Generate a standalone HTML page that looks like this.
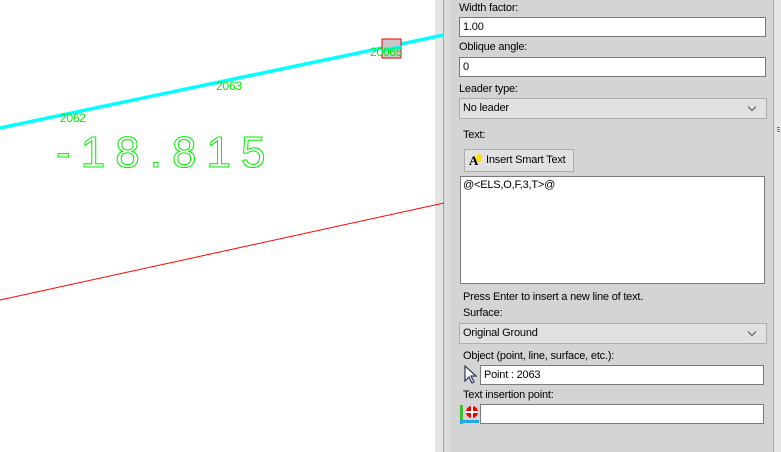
<!DOCTYPE html>
<html><head><style>
body{margin:0;width:781px;height:452px;overflow:hidden;background:#fff;font-family:"Liberation Sans",sans-serif;font-size:11px;letter-spacing:-0.2px;color:#000;position:relative}
.a{position:absolute}
.lbl{position:absolute;left:459px;font-size:11px;line-height:14px;white-space:nowrap}
.inp{position:absolute;left:459px;width:302px;height:18px;background:#fff;border:1px solid #7a7a7a;box-sizing:content-box;line-height:18px;padding-left:3px;font-size:11px;white-space:nowrap}
.sel{position:absolute;left:459px;width:303px;height:19px;background:#e1e1e1;border:1px solid #adadad;line-height:19px;padding-left:3px;font-size:11px}
.sel:after{content:"";position:absolute;right:11px;top:5px;width:5px;height:5px;border-right:1px solid #555;border-bottom:1px solid #555;transform:rotate(45deg)}
</style></head><body>
<div class="a" style="left:435px;top:0;width:346px;height:452px;background:#e6e6e6"></div>
<div class="a" style="left:443px;top:0;width:1px;height:452px;background:#a0a0a0"></div>
<div class="a" style="left:444px;top:0;width:6px;height:452px;background:#dcdcdc"></div>
<div class="a" style="left:450px;top:0;width:323px;height:452px;background:#d4d4d4"></div>
<div class="a" style="left:773px;top:0;width:1px;height:452px;background:#a8a8a8"></div>
<div class="a" style="left:777px;top:127px;width:3px;height:1px;background:#777;box-shadow:0 2px #777,0 4px #777"></div>
<svg class="a" style="left:0;top:0" width="444" height="452">
<line x1="0" y1="128" x2="444" y2="35" stroke="#00ffff" stroke-width="3.5"/>
<line x1="0" y1="300" x2="444" y2="203" stroke="#ff0000" stroke-width="1"/>
<rect x="382" y="39" width="19" height="19" fill="#c8c8c8" stroke="#e00" stroke-width="1"/>
<line x1="382" y1="51" x2="401" y2="47" stroke="#00ffff" stroke-width="3.5"/>
<g fill="#00ee00" font-family="Liberation Sans" font-size="12">
<text x="60" y="122">2062</text><text x="216" y="90">2063</text><text x="370" y="56">20065</text></g>
<text x="56" y="167" font-family="Liberation Sans" font-size="44" fill="none" stroke="#00ee00" stroke-width="1" letter-spacing="6.5" textLength="216">-18.815</text>
</svg>
<div class="lbl" style="top:1px">Width factor:</div>
<div class="inp" style="top:17px">1.00</div>
<div class="lbl" style="top:40px">Oblique angle:</div>
<div class="inp" style="top:57px">0</div>
<div class="lbl" style="top:82px">Leader type:</div>
<div class="sel" style="top:98px">No leader</div>
<div class="lbl" style="left:463px;top:128px">Text:</div>
<div class="a" style="left:464px;top:149px;width:108px;height:21px;background:#e1e1e1;border:1px solid #adadad;line-height:21px;white-space:nowrap"><span style="position:absolute;left:4px;font-family:'Liberation Serif';font-weight:bold;font-size:13px">A</span><span class="a" style="left:11px;top:4px;width:6px;height:8px;background:#ffe000;border-radius:50%"></span><span style="position:absolute;left:21px">Insert Smart Text</span></div>
<div class="a" style="left:460px;top:176px;width:301px;background:#fff;border:1px solid #7a7a7a;padding:2px 0 0 2px;box-sizing:content-box;height:104px">@&lt;ELS,O,F,3,T&gt;@</div>
<div class="lbl" style="left:463px;top:290px">Press Enter to insert a new line of text.</div>
<div class="lbl" style="left:463px;top:306px">Surface:</div>
<div class="sel" style="top:323px">Original Ground</div>
<div class="lbl" style="left:463px;top:349px">Object (point, line, surface, etc.):</div>
<svg class="a" style="left:463px;top:365px" width="16" height="20"><path d="M2 1 L2 16 L6 12 L9 18 L11 17 L8 11 L13 11 Z" fill="#fff" stroke="#2a3a5a" stroke-width="1.2"/></svg>
<div class="inp" style="left:480px;top:365px;width:279px">Point : 2063</div>
<div class="lbl" style="left:463px;top:388px">Text insertion point:</div>
<svg class="a" style="left:460px;top:405px" width="20" height="19"><rect x="0" y="0" width="3" height="19" fill="#3cbf2a"/><rect x="0" y="15" width="19" height="3" fill="#20a8e0"/><circle cx="12" cy="7" r="6" fill="#e00"/><path d="M6 7h12M12 1v12" stroke="#fff" stroke-width="2"/></svg>
<div class="inp" style="left:480px;top:404px;width:279px"></div>
</body></html>
